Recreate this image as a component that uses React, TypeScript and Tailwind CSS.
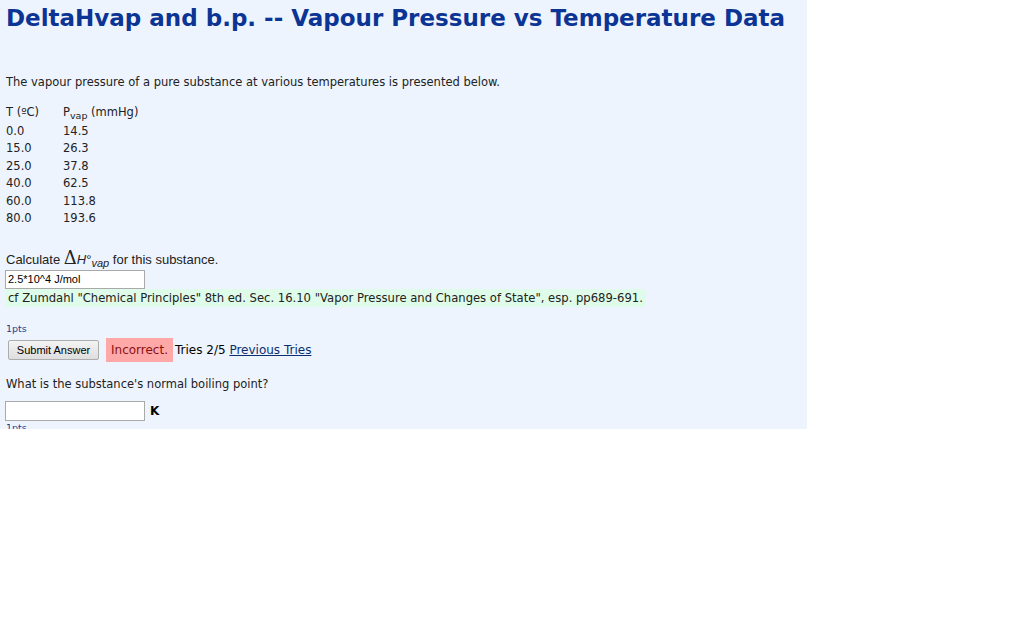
import React from "react";

export default function App() {
  const rows = [
    ["0.0", "14.5"],
    ["15.0", "26.3"],
    ["25.0", "37.8"],
    ["40.0", "62.5"],
    ["60.0", "113.8"],
    ["80.0", "193.6"],
  ];
  return (
    <div className="w-[1024px] h-[641px] bg-white">
      <div
        className="w-[807px] h-[429px] overflow-hidden bg-[#edf4fe] text-[#222] text-[11.5px]"
        style={{ fontFamily: '"DejaVu Sans", Verdana, sans-serif' }}
      >
        <h1 className="pl-[6px] pt-[4px] text-[23px] leading-[28px] font-bold text-[#0b3494]">
          DeltaHvap and b.p. -- Vapour Pressure vs Temperature Data
        </h1>
        <p className="pl-[6px] mt-[43px] leading-[14px]">
          The vapour pressure of a pure substance at various temperatures is presented below.
        </p>
        <div className="pl-[6px] mt-[14px] flex flex-col">
          <div className="flex h-[20px] items-center">
            <span className="w-[57px]">T (ºC)</span>
            <span>
              P<sub className="text-[9.5px]">vap</sub> (mmHg)
            </span>
          </div>
          {rows.map(([t, p]) => (
            <div key={t} className="flex h-[17.4px] items-center">
              <span className="w-[57px]">{t}</span>
              <span>{p}</span>
            </div>
          ))}
        </div>
        <div
          className="pl-[6px] mt-[23px] text-[13px] leading-[16px] h-[18px] whitespace-nowrap"
          style={{ fontFamily: '"Liberation Sans", Arial, sans-serif' }}
        >
          Calculate{" "}
          <span className="text-[18px]" style={{ fontFamily: '"DejaVu Serif", serif' }}>Δ</span>
          <span className="italic">H</span>°
          <sub className="italic text-[11px]">vap</sub> for this substance.
        </div>
        <div className="pl-[5px] mt-[2px]">
          <div
            className="w-[140px] h-[19px] bg-white border border-[#a9a9a9] text-[11px] leading-[17px] pl-[2px] text-black"
            style={{ fontFamily: '"Liberation Sans", Arial, sans-serif' }}
          >
            2.5*10^4 J/mol
          </div>
        </div>
        <div className="pl-[5px]">
          <div className="inline-block bg-[#dffbe9] px-[3px] h-[18px] leading-[18px] text-[11.6px]">
            cf Zumdahl "Chemical Principles" 8th ed. Sec. 16.10 "Vapor Pressure and Changes of State", esp. pp689-691.
          </div>
        </div>
        <div className="pl-[6px] mt-[15px] text-[9.5px] leading-[12px] text-[#1b3f8f]">1pts</div>
        <div className="pl-[8px] mt-[3px] flex items-center">
          <button
            className="w-[91px] h-[20px] border border-[#adadad] bg-gradient-to-b from-[#f4f4f4] to-[#dedede] text-[11px] text-black leading-[18px] rounded-[2px]"
            style={{ fontFamily: '"Liberation Sans", Arial, sans-serif' }}
          >
            Submit Answer
          </button>
          <span className="ml-[7px] h-[24px] px-[5px] leading-[24px] bg-[#ffa8a8] text-[#8a1010] text-[12px]">
            Incorrect.
          </span>
          <span className="ml-[2px] text-[12px] text-black">
            Tries 2/5 <span className="underline text-[#0b2f6e]">Previous Tries</span>
          </span>
        </div>
        <p className="pl-[6px] mt-[15px] leading-[14px]">
          What is the substance's normal boiling point?
        </p>
        <div className="pl-[5px] mt-[10px] flex items-center">
          <div className="w-[140px] h-[20px] bg-white border border-[#a9a9a9]" />
          <span className="ml-[5px] font-bold text-[12px] text-black">K</span>
        </div>
        <div className="pl-[6px] mt-[1px] text-[9.5px] leading-[12px] text-[#1b3f8f]">1pts</div>
      </div>
    </div>
  );
}
